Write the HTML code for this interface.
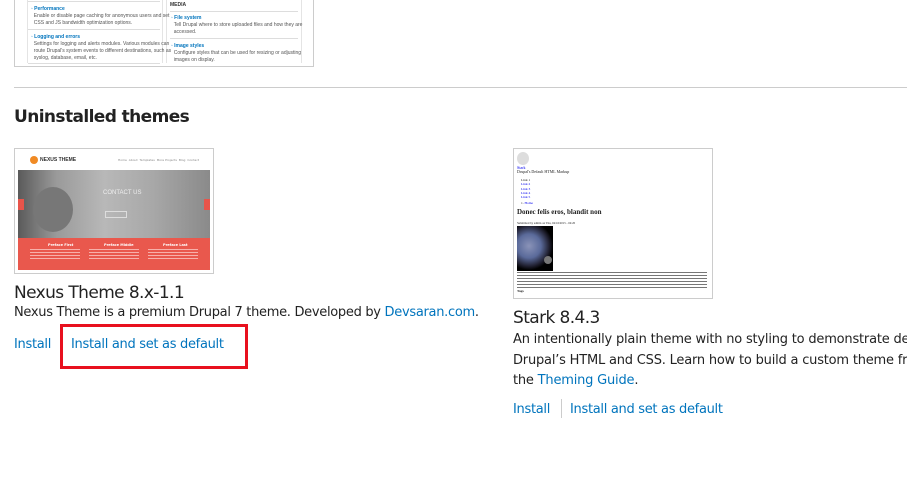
<!DOCTYPE html>
<html><head><meta charset="utf-8"><style>
body{margin:0;width:907px;height:485px;background:#fff;overflow:hidden;position:relative;font-family:"DejaVu Sans","Liberation Sans",sans-serif;color:#222}
.a{position:absolute;white-space:nowrap}
a{color:#0074bd;text-decoration:none}
.sm{font-size:5px;color:#555;font-family:"Liberation Sans",sans-serif}
</style></head><body>
<div class="a" style="left:14px;top:-2px;width:298px;height:68px;border:1px solid #ccc;border-top:none;background:#fff"></div>
<div class="a" style="left:27px;top:0;width:134px;height:63px;background:#fff;border-left:1px solid #e4e4e4;border-right:1px solid #e4e4e4"></div>
<div class="a" style="left:166px;top:0;width:134px;height:63px;border-left:1px solid #e4e4e4;border-right:1px solid #e4e4e4"></div>
<div class="a" style="left:28px;top:1px;width:132px;border-top:1px solid #ddd"></div>
<div class="a" style="left:28px;top:29px;width:132px;border-top:1px solid #ddd"></div>
<div class="a" style="left:28px;top:63px;width:132px;border-top:1px solid #ddd"></div>
<div class="a" style="left:170px;top:11px;width:128px;border-top:1px solid #ddd"></div>
<div class="a" style="left:170px;top:38px;width:128px;border-top:1px solid #ddd"></div>
<div class="a sm" style="left:31px;top:6px;line-height:7px"><span style="color:#0074bd;font-weight:bold">◦ Performance</span><br>&nbsp;&nbsp;Enable or disable page caching for anonymous users and set<br>&nbsp;&nbsp;CSS and JS bandwidth optimization options.</div>
<div class="a sm" style="left:31px;top:34px;line-height:7px"><span style="color:#0074bd;font-weight:bold">◦ Logging and errors</span><br>&nbsp;&nbsp;Settings for logging and alerts modules. Various modules can<br>&nbsp;&nbsp;route Drupal's system events to different destinations, such as<br>&nbsp;&nbsp;syslog, database, email, etc.</div>
<div class="a sm" style="left:170px;top:2px;font-weight:bold;color:#333">MEDIA</div>
<div class="a sm" style="left:171px;top:15px;line-height:7px"><span style="color:#0074bd;font-weight:bold">◦ File system</span><br>&nbsp;&nbsp;Tell Drupal where to store uploaded files and how they are<br>&nbsp;&nbsp;accessed.</div>
<div class="a sm" style="left:171px;top:43px;line-height:7px"><span style="color:#0074bd;font-weight:bold">◦ Image styles</span><br>&nbsp;&nbsp;Configure styles that can be used for resizing or adjusting<br>&nbsp;&nbsp;images on display.</div>

<div class="a" style="left:14px;top:87px;width:893px;border-top:1px solid #ccc"></div>
<div class="a" style="left:14px;top:107px;font-size:17px;font-weight:bold;letter-spacing:-0.6px;color:#222">Uninstalled themes</div>

<div class="a" style="left:14px;top:148px;width:198px;height:124px;border:1px solid #ccc;background:#fff">
 <div class="a" style="left:3px;top:3px;width:192px;height:118px;background:#fff">
  <div class="a" style="left:12px;top:4px;width:8px;height:8px;border-radius:50%;background:#f08a24"></div>
  <div class="a" style="left:22px;top:5px;font-size:5px;font-weight:bold;color:#333;font-family:'Liberation Sans',sans-serif">NEXUS THEME</div>
  <div class="a" style="left:100px;top:6px;font-size:3px;color:#888">Home &nbsp;About &nbsp;Templates &nbsp;More Projects &nbsp;Blog &nbsp;Contact</div>
  <div class="a" style="left:0;top:18px;width:192px;height:68px;background:linear-gradient(90deg,#5a5a5a 0%,#9a9a9a 20%,#b8b8b8 45%,#a8a8a8 70%,#8a8a8a 100%)"></div>
  <div class="a" style="left:15px;top:35px;width:40px;height:45px;border-radius:50%;background:#777"></div>
  <div class="a" style="left:85px;top:38px;font-size:6px;color:#eee;font-family:'Liberation Sans',sans-serif">CONTACT US</div>
  <div class="a" style="left:87px;top:59px;width:20px;height:5px;border:1px solid #ddd"></div>
  <div class="a" style="left:0;top:47px;width:6px;height:11px;background:#e8544a"></div>
  <div class="a" style="left:186px;top:47px;width:6px;height:11px;background:#e8544a"></div>
  <div class="a" style="left:0;top:86px;width:192px;height:32px;background:#e9584d"></div>
  <div class="a" style="left:30px;top:91px;font-size:3.5px;color:#fff;font-weight:bold">Preface First</div>
  <div class="a" style="left:86px;top:91px;font-size:3.5px;color:#fff;font-weight:bold">Preface Middle</div>
  <div class="a" style="left:145px;top:91px;font-size:3.5px;color:#fff;font-weight:bold">Preface Last</div>
  <div class="a" style="left:12px;top:97px;width:50px;height:12px;background:repeating-linear-gradient(#f7b0aa 0 1px,transparent 1px 3px)"></div>
  <div class="a" style="left:71px;top:97px;width:50px;height:12px;background:repeating-linear-gradient(#f7b0aa 0 1px,transparent 1px 3px)"></div>
  <div class="a" style="left:130px;top:97px;width:50px;height:12px;background:repeating-linear-gradient(#f7b0aa 0 1px,transparent 1px 3px)"></div>
 </div>
</div>
<div class="a" style="left:14px;top:283px;font-size:17px;letter-spacing:-0.6px;color:#222">Nexus Theme 8.x-1.1</div>
<div class="a" style="left:14px;top:305px;font-size:13px;letter-spacing:-0.3px;color:#222">Nexus Theme is a premium Drupal 7 theme. Developed by <a>Devsaran.com</a>.</div>
<div class="a" style="left:14px;top:337px;font-size:13px;letter-spacing:-0.3px"><a>Install</a></div>
<div class="a" style="left:71px;top:337px;font-size:13px;letter-spacing:-0.3px"><a>Install and set as default</a></div>
<div class="a" style="left:60px;top:324px;width:182px;height:39px;border:3px solid #e8101e"></div>

<div class="a" style="left:513px;top:148px;width:198px;height:149px;border:1px solid #ccc;background:#fff;font-family:'Liberation Serif',serif">
 <div class="a" style="left:3px;top:3px;width:12px;height:13px;border-radius:50%;background:#ddd"></div>
 <div class="a" style="left:3px;top:17px;font-size:4px;line-height:4px"><a style="color:#00e">Stark</a><br>Drupal's Default HTML Markup</div>
 <div class="a" style="left:7px;top:29px;font-size:3.5px;line-height:4.3px">Link 1<br><a style="color:#00e">Link 2<br>Link 3<br>Link 4<br>Link 5</a></div>
 <div class="a" style="left:7px;top:52px;font-size:3.5px">1. <a style="color:#00e">Home</a></div>
 <div class="a" style="left:3px;top:59px;font-size:7px;font-weight:bold">Donec felis eros, blandit non</div>
 <div class="a" style="left:3px;top:72px;font-size:3px">Submitted by admin on Thu, 04/16/2015 - 04:20</div>
 <div class="a" style="left:3px;top:77px;width:36px;height:45px;background:radial-gradient(circle at 12px 20px,#8a93b8 0,#5a6a9a 12px,#223 20px,#000 24px)"></div>
 <div class="a" style="left:30px;top:107px;width:8px;height:8px;border-radius:50%;background:#777"></div>
 <div class="a" style="left:3px;top:123px;width:190px;height:18px;background:repeating-linear-gradient(#777 0 1px,#fff 1px 3px)"></div>
 <div class="a" style="left:3px;top:140px;font-size:3.5px;font-weight:bold">Tags</div>
</div>
<div class="a" style="left:513px;top:308px;font-size:17px;letter-spacing:-0.6px;color:#222">Stark 8.4.3</div>
<div class="a" style="left:513px;top:330px;font-size:13px;line-height:20.5px;letter-spacing:-0.2px;color:#222">An intentionally plain theme with no styling to demonstrate default<br>Drupal’s HTML and CSS. Learn how to build a custom theme from<br>the <a>Theming Guide</a>.</div>
<div class="a" style="left:513px;top:402px;font-size:13px;letter-spacing:-0.3px"><a>Install</a></div>
<div class="a" style="left:561px;top:399px;height:19px;border-left:1px solid #ccc"></div>
<div class="a" style="left:570px;top:402px;font-size:13px;letter-spacing:-0.3px"><a>Install and set as default</a></div>
</body></html>
